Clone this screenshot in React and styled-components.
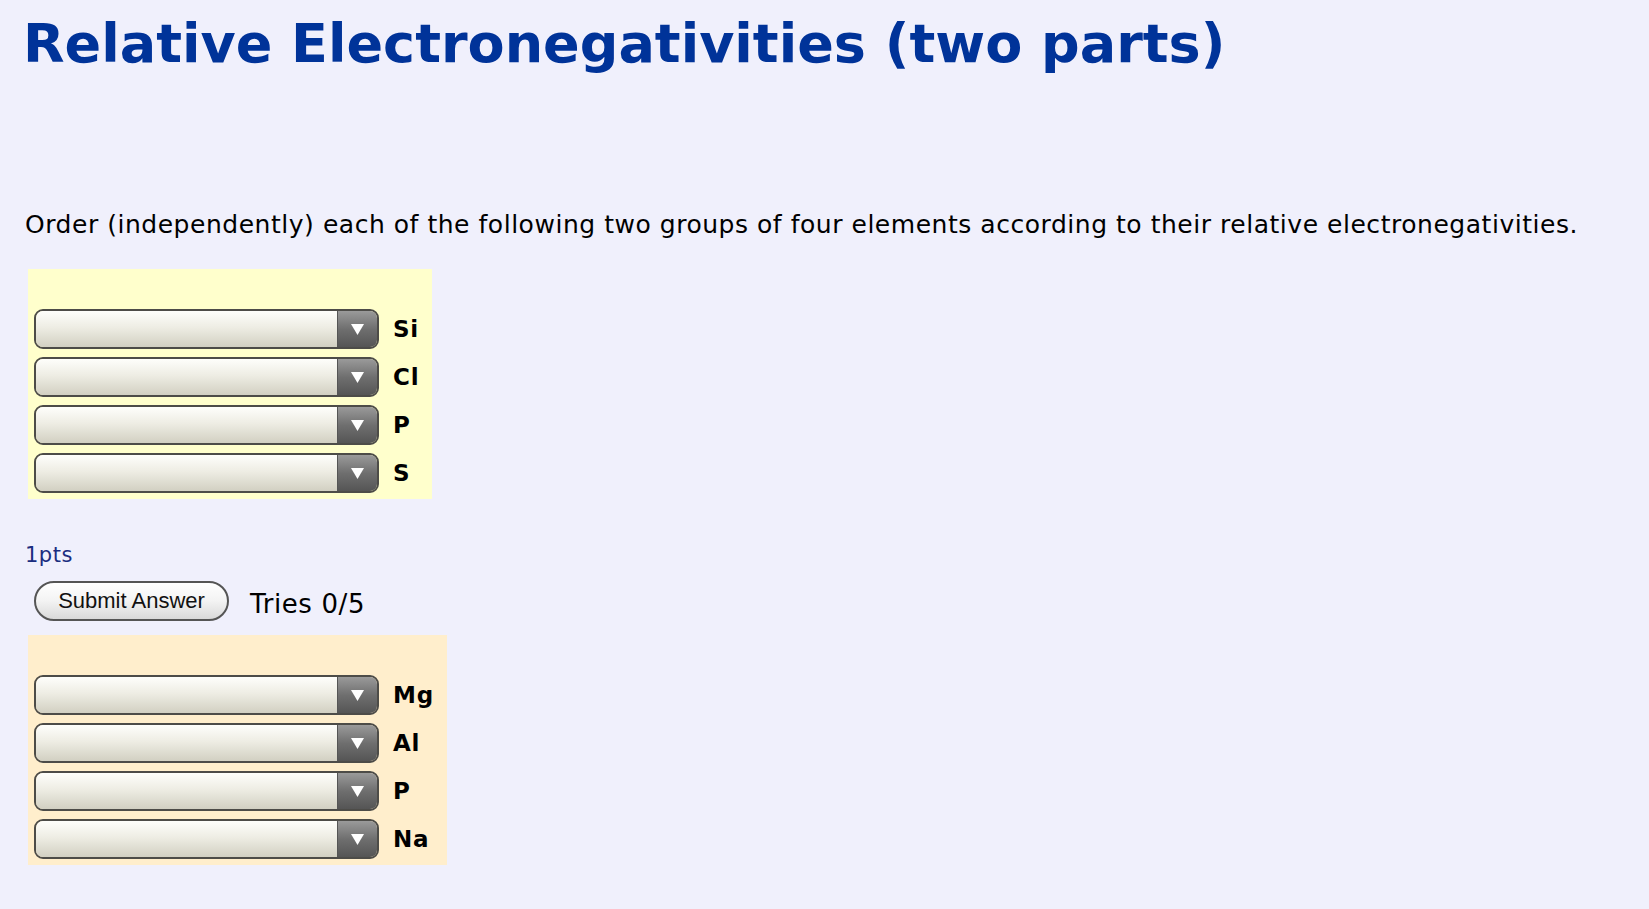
import React from "react";
import styled, { createGlobalStyle } from "styled-components";

const GlobalStyle = createGlobalStyle`
  html, body {
    margin: 0;
    padding: 0;
    background: #f0f0fc;
  }
  body {
    font-family: "DejaVu Sans", Verdana, sans-serif;
    color: #000;
  }
`;

const Page = styled.div`
  padding: 12px 0 40px 23px;
  display: flex;
  flex-direction: column;
  align-items: flex-start;
`;

const Title = styled.h1`
  margin: 0;
  font-size: 54px;
  line-height: 64px;
  font-weight: bold;
  color: #003399;
`;

const Intro = styled.p`
  margin: 134px 0 0 2px;
  font-size: 25px;
  line-height: 29px;
  letter-spacing: 0.53px;
`;

const Group = styled.div`
  margin: ${(p) => p.$top}px 0 0 5px;
  background: ${(p) => p.$bg};
  padding: 40px 13px 6px 6px;
  display: flex;
  flex-direction: column;
  gap: 8px;
`;

const Row = styled.div`
  display: flex;
  align-items: center;
  gap: 14px;
`;

const Dropdown = styled.div`
  width: 345px;
  height: 40px;
  box-sizing: border-box;
  border: 2px solid #4d4c48;
  border-radius: 9px;
  overflow: hidden;
  display: flex;
  cursor: pointer;
`;

const Field = styled.div`
  flex: 1;
  background: linear-gradient(#fefefb 0%, #eeede4 45%, #d2d0c2 100%);
`;

const Arrow = styled.div`
  width: 39px;
  display: flex;
  align-items: center;
  justify-content: center;
  background: linear-gradient(#9a9a9a 0%, #6f6f6f 50%, #555 100%);
  border-left: 1px solid #555;
`;

const Label = styled.span`
  font-size: 23px;
  font-weight: bold;
  line-height: 26px;
  letter-spacing: 0.8px;
`;

const Points = styled.div`
  margin: 44px 0 0 2px;
  font-size: 21px;
  line-height: 24px;
  letter-spacing: 0.5px;
  color: #1a2d80;
`;

const SubmitRow = styled.div`
  margin: 14px 0 0 11px;
  display: flex;
  align-items: center;
  gap: 21px;
`;

const SubmitButton = styled.button`
  width: 195px;
  height: 40px;
  border: 2px solid #555;
  border-radius: 20px;
  background: linear-gradient(#ffffff 0%, #f3f3f3 50%, #d9d9d9 100%);
  font-family: "Liberation Sans", Arial, sans-serif;
  font-size: 22px;
  color: #111;
  padding: 0;
  cursor: pointer;
`;

const Tries = styled.span`
  font-size: 26px;
  line-height: 30px;
  letter-spacing: 0.6px;
  margin-top: 6px;
`;

function Select() {
  return (
    <Dropdown>
      <Field />
      <Arrow>
        <svg width="15" height="13" viewBox="0 0 15 13">
          <path d="M1 1 L14 1 L7.5 12 Z" fill="#fff" />
        </svg>
      </Arrow>
    </Dropdown>
  );
}

function ElementGroup({ elements, bg, top }) {
  return (
    <Group $bg={bg} $top={top}>
      {elements.map((el, i) => (
        <Row key={i}>
          <Select />
          <Label>{el}</Label>
        </Row>
      ))}
    </Group>
  );
}

export default function App() {
  return (
    <>
      <GlobalStyle />
      <Page>
        <Title>Relative Electronegativities (two parts)</Title>
        <Intro>
          Order (independently) each of the following two groups of four
          elements according to their relative electronegativities.
        </Intro>
        <ElementGroup elements={["Si", "Cl", "P", "S"]} bg="#ffffcc" top={30} />
        <Points>1pts</Points>
        <SubmitRow>
          <SubmitButton>Submit Answer</SubmitButton>
          <Tries>Tries 0/5</Tries>
        </SubmitRow>
        <ElementGroup elements={["Mg", "Al", "P", "Na"]} bg="#ffeecc" top={14} />
      </Page>
    </>
  );
}
